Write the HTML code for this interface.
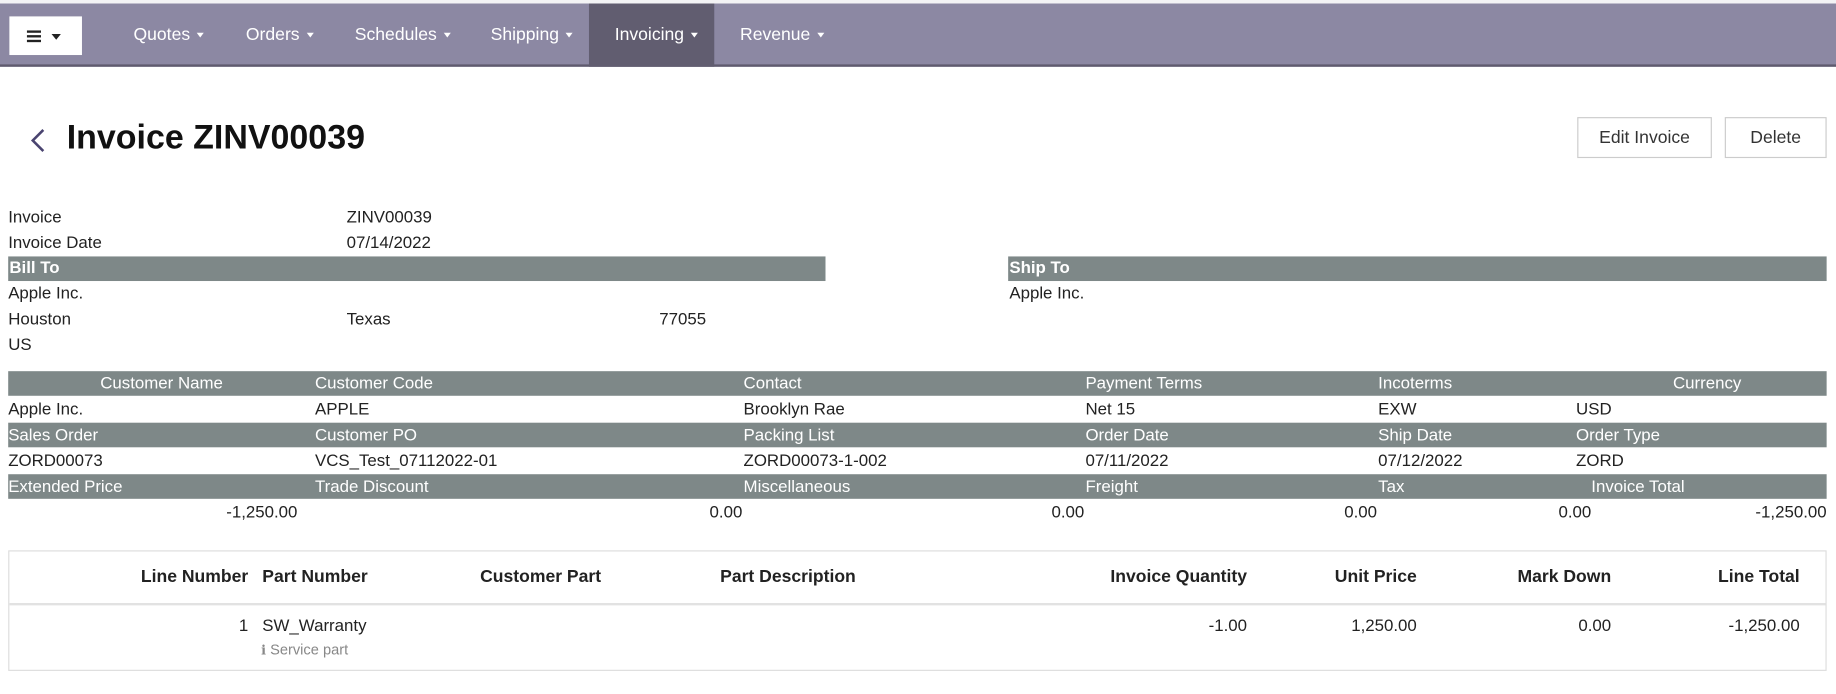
<!DOCTYPE html>
<html><head><meta charset="utf-8">
<style>
*{margin:0;padding:0;box-sizing:border-box}
html,body{width:1836px;height:694px;overflow:hidden;background:#fff}
#w{position:absolute;left:0;top:0;width:1568px;height:593px;transform:scale(1.17092);transform-origin:0 0;font-family:"Liberation Sans",sans-serif;color:#222;font-size:14.4px}
.a{position:absolute;white-space:nowrap;line-height:20px}
.r{text-align:right}
.bar{position:absolute;background:#7e8888;height:21px}
.w{color:#fff}
.nav{position:absolute;left:0;top:3px;width:1568px;height:54px;background:#8c88a3;border-bottom:2px solid #5f5b6e}
.ni{position:absolute;top:17px;color:#fff;font-size:15px;line-height:20px}
.ni:after{content:"";display:inline-block;margin-left:6px;vertical-align:middle;border-left:3px solid transparent;border-right:3px solid transparent;border-top:4px solid #fff}
.btn{position:absolute;top:100px;height:35px;border:1px solid #ccc;background:#fff;font-size:15px;line-height:33px;text-align:center;color:#333}
.b{font-weight:bold}
.h{font-size:15px}
</style></head><body><div id="w">
<div style="position:absolute;left:0;top:0;width:1568px;height:3px;background:#f3f3f5"></div>
<div class="nav">
 <div style="position:absolute;left:503px;top:0;width:107px;height:54px;background:#615d70"></div>
 <div style="position:absolute;left:8px;top:11px;width:62px;height:33px;background:#fff">
  <div style="position:absolute;left:15px;top:12px;width:12px;height:2px;background:#222"></div>
  <div style="position:absolute;left:15px;top:16px;width:12px;height:2px;background:#222"></div>
  <div style="position:absolute;left:15px;top:20px;width:12px;height:2px;background:#222"></div>
  <div style="position:absolute;left:36px;top:15px;border-left:4px solid transparent;border-right:4px solid transparent;border-top:5px solid #222"></div>
 </div>
 <div class="ni" style="left:114px">Quotes</div>
 <div class="ni" style="left:210px">Orders</div>
 <div class="ni" style="left:303px">Schedules</div>
 <div class="ni" style="left:419px">Shipping</div>
 <div class="ni" style="left:525px">Invoicing</div>
 <div class="ni" style="left:632px">Revenue</div>
</div>
<svg style="position:absolute;left:24px;top:109px" width="16" height="22"><path d="M13 2 L4 11 L13 20" fill="none" stroke="#4a4470" stroke-width="2.2"/></svg>
<div class="a b" style="left:57px;top:101px;font-size:29px;line-height:34px;color:#111">Invoice ZINV00039</div>
<div class="btn" style="left:1347px;width:115px">Edit Invoice</div>
<div class="btn" style="left:1473px;width:87px">Delete</div>

<div class="a" style="left:7px;top:176px">Invoice</div><div class="a" style="left:296px;top:176px">ZINV00039</div>
<div class="a" style="left:7px;top:198px">Invoice Date</div><div class="a" style="left:296px;top:198px">07/14/2022</div>
<div class="bar" style="left:7px;top:219px;width:698px"></div><div class="a b w" style="left:8px;top:219px">Bill To</div>
<div class="bar" style="left:861px;top:219px;width:699px"></div><div class="a b w" style="left:862px;top:219px">Ship To</div>
<div class="a" style="left:7px;top:241px">Apple Inc.</div><div class="a" style="left:862px;top:241px">Apple Inc.</div>
<div class="a" style="left:7px;top:263px">Houston</div><div class="a" style="left:296px;top:263px">Texas</div><div class="a" style="left:563px;top:263px">77055</div>
<div class="a" style="left:7px;top:285px">US</div>

<div class="bar" style="left:7px;top:317px;width:1553px"></div>
<div class="bar" style="left:7px;top:361px;width:1553px"></div>
<div class="bar" style="left:7px;top:405px;width:1553px"></div>
<div class="a w" style="left:7px;width:262px;text-align:center;top:318px">Customer Name</div>
<div class="a w" style="left:269px;top:318px">Customer Code</div>
<div class="a w" style="left:635px;top:318px">Contact</div>
<div class="a w" style="left:927px;top:318px">Payment Terms</div>
<div class="a w" style="left:1177px;top:318px">Incoterms</div>
<div class="a w" style="left:1356px;width:204px;text-align:center;top:318px">Currency</div>
<div class="a" style="left:7px;top:340px">Apple Inc.</div><div class="a" style="left:269px;top:340px">APPLE</div><div class="a" style="left:635px;top:340px">Brooklyn Rae</div><div class="a" style="left:927px;top:340px">Net 15</div><div class="a" style="left:1177px;top:340px">EXW</div><div class="a" style="left:1346px;top:340px">USD</div>
<div class="a w" style="left:7px;top:362px">Sales Order</div><div class="a w" style="left:269px;top:362px">Customer PO</div><div class="a w" style="left:635px;top:362px">Packing List</div><div class="a w" style="left:927px;top:362px">Order Date</div><div class="a w" style="left:1177px;top:362px">Ship Date</div><div class="a w" style="left:1346px;top:362px">Order Type</div>
<div class="a" style="left:7px;top:384px">ZORD00073</div><div class="a" style="left:269px;top:384px">VCS_Test_07112022-01</div><div class="a" style="left:635px;top:384px">ZORD00073-1-002</div><div class="a" style="left:927px;top:384px">07/11/2022</div><div class="a" style="left:1177px;top:384px">07/12/2022</div><div class="a" style="left:1346px;top:384px">ZORD</div>
<div class="a w" style="left:7px;top:406px">Extended Price</div><div class="a w" style="left:269px;top:406px">Trade Discount</div><div class="a w" style="left:635px;top:406px">Miscellaneous</div><div class="a w" style="left:927px;top:406px">Freight</div><div class="a w" style="left:1177px;top:406px">Tax</div><div class="a w" style="left:1359px;top:406px">Invoice Total</div>
<div class="a r" style="right:1314px;top:428px">-1,250.00</div>
<div class="a r" style="right:934px;top:428px">0.00</div>
<div class="a r" style="right:642px;top:428px">0.00</div>
<div class="a r" style="right:392px;top:428px">0.00</div>
<div class="a r" style="right:209px;top:428px">0.00</div>
<div class="a r" style="right:8px;top:428px">-1,250.00</div>

<div style="position:absolute;left:7px;top:470px;width:1553px;height:103px;border:1px solid #ddd"></div>
<div style="position:absolute;left:8px;top:515px;width:1551px;height:2px;background:#e2e2e2"></div>
<div class="a b r h" style="right:1356px;top:483px">Line Number</div>
<div class="a b h" style="left:224px;top:483px">Part Number</div>
<div class="a b h" style="left:410px;top:483px">Customer Part</div>
<div class="a b h" style="left:615px;top:483px">Part Description</div>
<div class="a b r h" style="right:503px;top:483px">Invoice Quantity</div>
<div class="a b r h" style="right:358px;top:483px">Unit Price</div>
<div class="a b r h" style="right:192px;top:483px">Mark Down</div>
<div class="a b r h" style="right:31px;top:483px">Line Total</div>
<div class="a r" style="right:1356px;top:525px">1</div>
<div class="a" style="left:224px;top:525px">SW_Warranty</div>
<div class="a" style="left:223px;top:545px;font-size:12.5px;color:#888"><b style="font-family:'DejaVu Serif',serif;font-size:11px">i</b> Service part</div>
<div class="a r" style="right:503px;top:525px">-1.00</div>
<div class="a r" style="right:358px;top:525px">1,250.00</div>
<div class="a r" style="right:192px;top:525px">0.00</div>
<div class="a r" style="right:31px;top:525px">-1,250.00</div>
</div></body></html>
